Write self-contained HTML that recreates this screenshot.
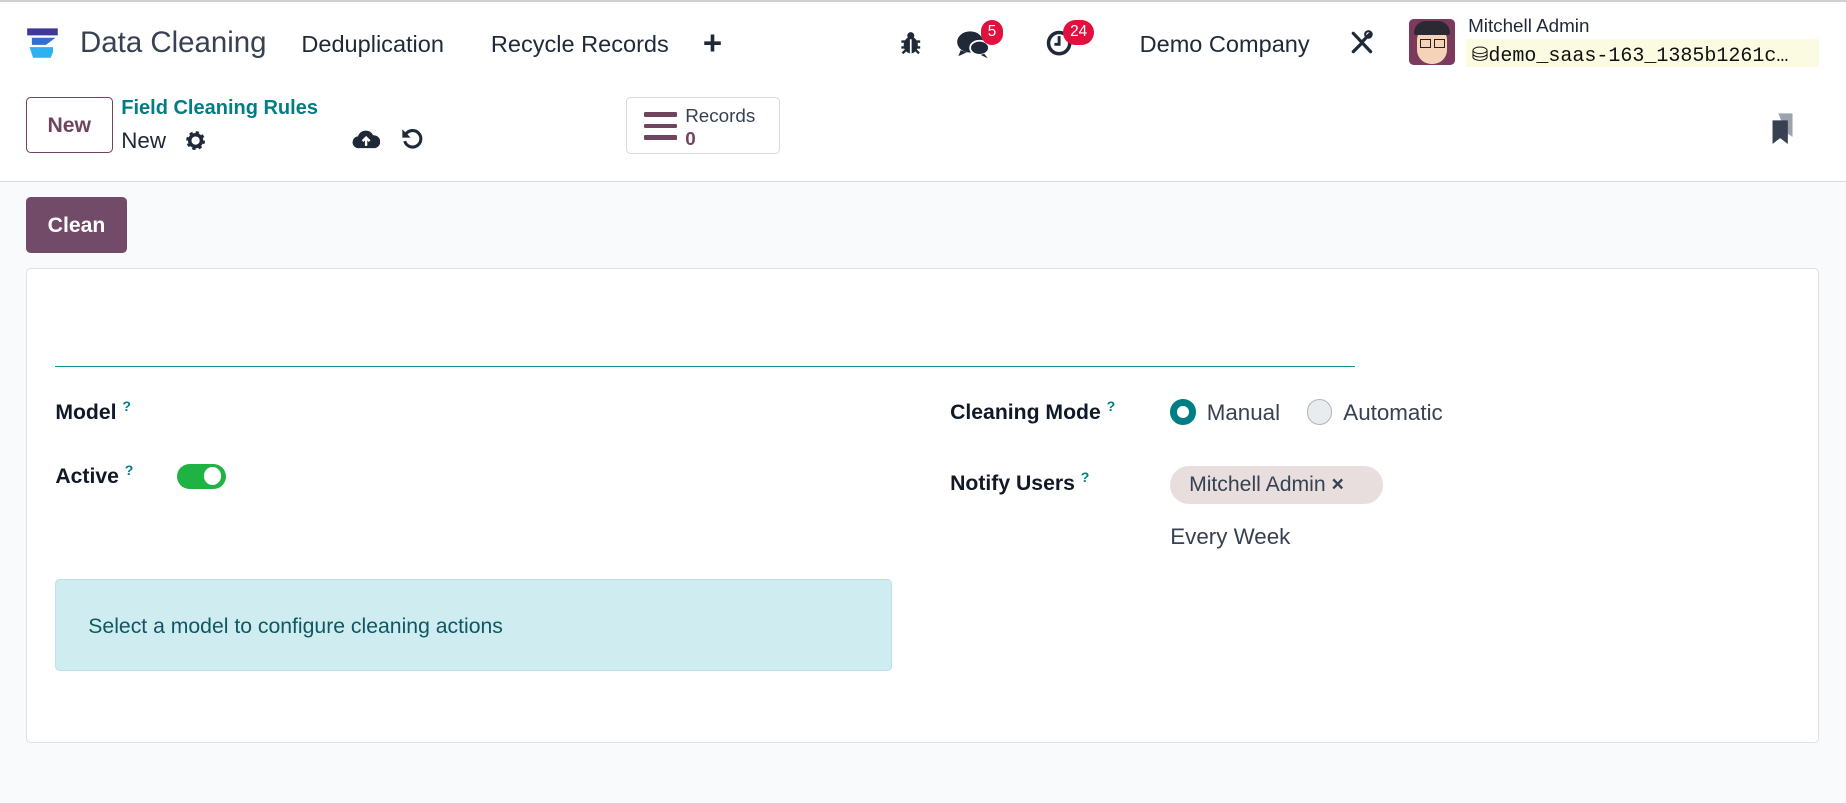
<!DOCTYPE html>
<html><head><meta charset="utf-8"><style>
html,body{margin:0;padding:0;}
body{width:1846px;height:803px;overflow:hidden;background:#f9fafb;font-family:"Liberation Sans",sans-serif;color:#1f2937;}
#w{zoom:1.17730;width:1568px;height:682px;position:relative;}
.a{position:absolute;white-space:nowrap;}
.top{position:absolute;left:0;top:0;width:1568px;height:155px;background:#fff;border-top:2px solid #d0d0d0;border-bottom:1px solid #d8dadd;box-sizing:border-box;}
.nav{font-size:20px;color:#1f2937;top:26px;}
.badge{position:absolute;background:#e0103f;color:#fff;font-size:13px;border-radius:11px;height:21px;line-height:21px;text-align:center;padding:0 6px;}
.q{color:#017e84;font-size:12px;font-weight:bold;vertical-align:top;position:relative;top:-3px;margin-left:5px;}
.lbl{font-size:18px;font-weight:bold;color:#111827;}
</style></head><body><div id="w">
<div class="top"></div>
<svg class="a" style="left:22px;top:22px" width="28" height="28" viewBox="0 0 28 28">
<path d="M1 2h26v6H1z" fill="#3f3a9a"/><path d="M5 10h20l-8 6H5z" fill="#2f6fd6"/><path d="M3 18h20v4l-2 5H6z" fill="#2fb0f0"/>
</svg>
<div class="a" style="left:68px;top:22px;font-size:25px;color:#374151">Data Cleaning</div>
<div class="a nav" style="left:256px">Deduplication</div>
<div class="a nav" style="left:417px">Recycle Records</div>
<div class="a" style="left:597px;top:20px;font-size:28px;font-weight:bold;color:#1f2937">+</div>
<svg class="a" style="left:764px;top:26px" width="20" height="20" viewBox="0 0 20 20"><ellipse cx="10" cy="12" rx="6" ry="7" fill="#1f2937"/><circle cx="10" cy="4" r="3" fill="#1f2937"/><path d="M2 9h16M2 14h16M3 19l3-3M17 19l-3-3" stroke="#1f2937" stroke-width="2"/><path d="M10 7v12" stroke="#fff" stroke-width="1.5"/></svg>
<svg class="a" style="left:812px;top:25px" width="30" height="26" viewBox="0 0 30 26"><ellipse cx="12" cy="11" rx="11" ry="9" fill="#1f2937"/><path d="M4 18l-2 5 7-3z" fill="#1f2937"/><ellipse cx="20" cy="16" rx="8" ry="6" fill="#1f2937" stroke="#fff" stroke-width="1.5"/><path d="M24 21l3 4-6-3z" fill="#1f2937"/></svg>
<div class="badge" style="left:833px;top:17px">5</div>
<svg class="a" style="left:888px;top:25px" width="24" height="24" viewBox="0 0 24 24"><circle cx="12" cy="12" r="9" fill="none" stroke="#1f2937" stroke-width="3"/><path d="M12 6v7H8" stroke="#1f2937" stroke-width="2.5" fill="none"/></svg>
<div class="badge" style="left:903px;top:17px">24</div>
<div class="a nav" style="left:968px">Demo Company</div>
<svg class="a" style="left:1146px;top:25px" width="22" height="22" viewBox="0 0 24 24"><path d="M4 4l16 17M19 5l-6 6M4 21l8-8" stroke="#1f2937" stroke-width="3" fill="none" stroke-linecap="round"/><circle cx="18" cy="5" r="3" fill="none" stroke="#1f2937" stroke-width="2"/></svg>
<div class="a" style="left:1197px;top:16px;width:39px;height:39px;background:#7b3a5c;border-radius:4px;overflow:hidden">
<div style="position:absolute;left:7px;top:8px;width:25px;height:30px;background:#f5d3b8;border-radius:10px 10px 12px 12px"></div>
<div style="position:absolute;left:4px;top:2px;width:31px;height:12px;background:#2a2a33;border-radius:12px 12px 2px 2px"></div>
<div style="position:absolute;left:9px;top:17px;width:8px;height:6px;border:1.5px solid #222"></div><div style="position:absolute;left:21px;top:17px;width:8px;height:6px;border:1.5px solid #222"></div>
</div>
<div class="a" style="left:1247px;top:13px;font-size:16px;color:#1f2937">Mitchell Admin</div>
<div class="a" style="left:1245px;top:33px;width:300px;height:24px;background:#fbfbe2"></div>
<div class="a" style="left:1250px;top:36px;font-size:17px;font-family:'Liberation Mono',monospace;color:#111">⛁demo_saas-163_1385b1261c…</div>
<div class="a" style="left:22px;top:82px;width:72px;height:46px;border:1px solid #71445d;border-radius:4px;color:#71445d;font-size:18px;font-weight:bold;text-align:center;line-height:48px">New</div>
<div class="a" style="left:103px;top:82px;font-size:17px;font-weight:bold;color:#017e84">Field Cleaning Rules</div>
<div class="a" style="left:103px;top:109px;font-size:19px;color:#1f2937">New</div>
<svg class="a" style="left:157px;top:110px" width="18" height="18" viewBox="0 0 18 18"><circle cx="9" cy="9" r="6" fill="none" stroke="#1f2937" stroke-width="4" stroke-dasharray="2.4 2.3"/><circle cx="9" cy="9" r="5" fill="none" stroke="#1f2937" stroke-width="3"/></svg>
<svg class="a" style="left:299px;top:108px" width="24" height="20" viewBox="0 0 24 20"><path d="M6 18a5 5 0 0 1-1-10 7 7 0 0 1 13-1 5 5 0 0 1 1 11z" fill="#1f2937"/><path d="M12 16V9M9 12l3-3 3 3" stroke="#fff" stroke-width="2" fill="none"/></svg>
<svg class="a" style="left:340px;top:108px" width="20" height="20" viewBox="0 0 20 20"><path d="M5 6a7 7 0 1 1-1 6" stroke="#1f2937" stroke-width="2.6" fill="none"/><path d="M2 2v7h7z" fill="#1f2937"/></svg>
<div class="a" style="left:532px;top:82px;width:129px;height:47px;border:1px solid #d8dadd;border-radius:4px;background:#fff"></div>
<div class="a" style="left:547px;top:95px;width:28px;height:4px;background:#71445d;border-radius:1px"></div>
<div class="a" style="left:547px;top:105px;width:28px;height:4px;background:#71445d;border-radius:1px"></div>
<div class="a" style="left:547px;top:115px;width:28px;height:4px;background:#71445d;border-radius:1px"></div>
<div class="a" style="left:582px;top:89px;font-size:16px;color:#374151">Records</div>
<div class="a" style="left:582px;top:109px;font-size:16px;color:#71445d;font-weight:bold">0</div>
<svg class="a" style="left:1503px;top:94px" width="24" height="30" viewBox="0 0 24 30"><path d="M8 2h12v20l-6-4z" fill="#9ca3af"/><path d="M3 8h13v20l-6.5-5L3 28z" fill="#374151"/></svg>
<div class="a" style="left:22px;top:167px;width:86px;height:48px;background:#714b67;border-radius:4px;color:#fff;font-size:18px;font-weight:bold;text-align:center;line-height:50px">Clean</div>
<div class="a" style="left:22px;top:228px;width:1521px;height:401px;background:#fff;border:1px solid #dee2e6;border-radius:4px"></div>
<div class="a" style="left:47px;top:311px;width:1104px;height:1px;background:#1a8a90"></div>
<div class="a lbl" style="left:47px;top:341px">Model<span class="q">?</span></div>
<div class="a lbl" style="left:47px;top:395px">Active<span class="q">?</span></div>
<div class="a" style="left:150px;top:394px;width:42px;height:21px;background:#1fb344;border-radius:11px"><div style="position:absolute;right:4px;top:3px;width:15px;height:15px;background:#fff;border-radius:50%"></div></div>
<div class="a" style="left:47px;top:492px;width:711px;height:78px;background:#cfecf0;border:1px solid #b9e2e8;border-radius:4px;box-sizing:border-box"></div>
<div class="a" style="left:75px;top:522px;font-size:18px;color:#0e5763">Select a model to configure cleaning actions</div>
<div class="a lbl" style="left:807px;top:341px">Cleaning Mode<span class="q">?</span></div>
<div class="a" style="left:994px;top:339px;width:10px;height:10px;border:6px solid #017e84;border-radius:50%;background:#fff"></div>
<div class="a" style="left:1025px;top:340px;font-size:19px;color:#374151">Manual</div>
<div class="a" style="left:1110px;top:339px;width:20px;height:20px;border:1px solid #b0b4ba;border-radius:50%;background:#e9ecef"></div>
<div class="a" style="left:1141px;top:340px;font-size:19px;color:#374151">Automatic</div>
<div class="a lbl" style="left:807px;top:401px">Notify Users<span class="q">?</span></div>
<div class="a" style="left:994px;top:396px;width:181px;height:32px;background:#e8dede;border-radius:16px"></div>
<div class="a" style="left:1010px;top:402px;font-size:18px;color:#374151">Mitchell Admin <b>×</b></div>
<div class="a" style="left:994px;top:445px;font-size:19px;color:#374151">Every Week</div>
</div></body></html>
